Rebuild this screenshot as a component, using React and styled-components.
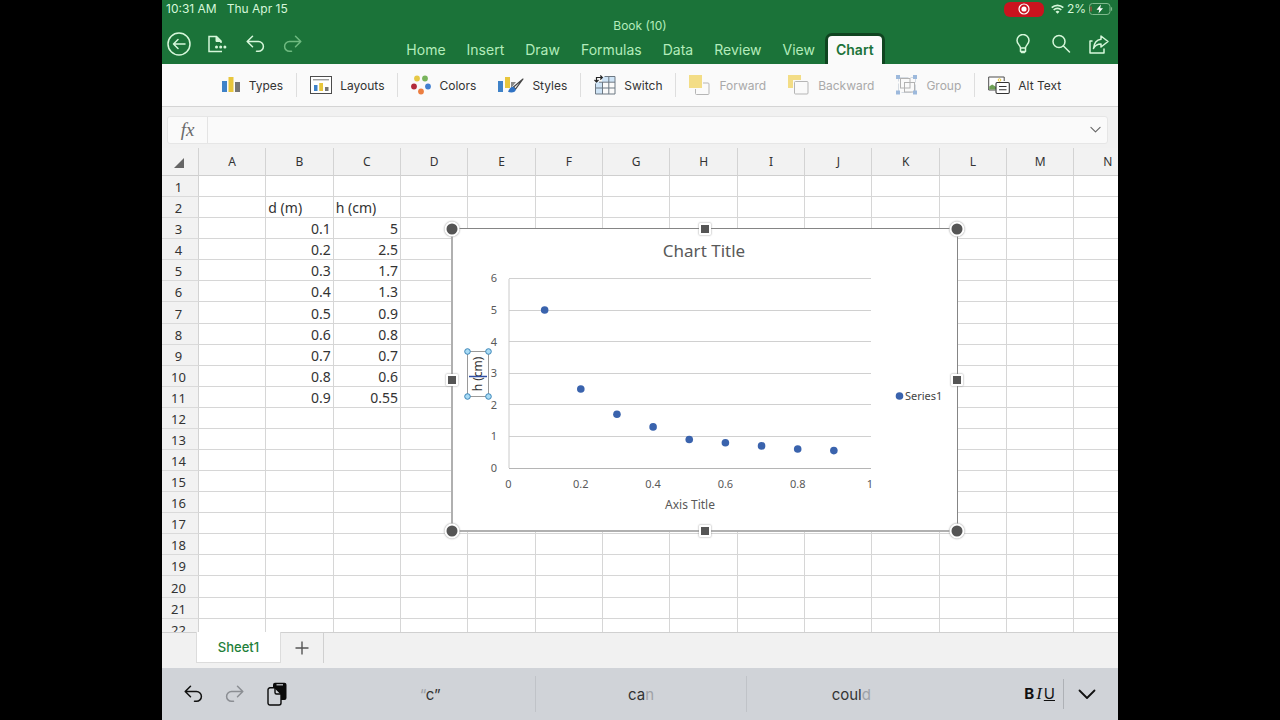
import React from "react";
import styled, { createGlobalStyle, css } from "styled-components";

const UI_FONT = `Inter, "Liberation Sans", sans-serif`;
const SHEET_FONT = `"Noto Sans", "Open Sans", sans-serif`;

const GlobalStyle = createGlobalStyle`
  *, *::before, *::after { box-sizing: border-box; }
  body { margin: 0; background: #000; font-family: ${UI_FONT}; }
  button, input { font: inherit; color: inherit; background: none; border: 0; padding: 0; margin: 0; }
  svg { display: block; flex: none; }
`;

const Page = styled.div`
  height: 100vh;
  padding: 0 162px;
  background: #000;
`;

const Screen = styled.div`
  display: flex;
  flex-direction: column;
  height: 100%;
  overflow: hidden;
  background: #fff;
`;

/* ---------- header ---------- */

const Header = styled.header`
  background: #1b7339;
  color: #b3ecbb;
`;

const StatusBar = styled.div`
  display: flex;
  justify-content: space-between;
  align-items: center;
  height: 18px;
  padding: 0 5px 0 4px;
  font-size: 12px;
  line-height: 18px;
  color: #d6f7da;
`;

const StatusGroup = styled.div`
  display: flex;
  align-items: center;
  gap: ${(p) => p.$gap}px;
`;

const RecordPill = styled.span`
  display: flex;
  align-items: center;
  justify-content: center;
  width: 40px;
  height: 15px;
  margin-right: 4px;
  border-radius: 6px;
  background: #c9131e;
`;

const TitleBar = styled.div`
  display: grid;
  grid-template-columns: 1fr auto 1fr;
`;

const IconGroup = styled.div`
  display: flex;
  align-items: center;
  justify-content: ${(p) => (p.$end ? "flex-end" : "flex-start")};
  gap: 14px;
  height: 46px;
  padding: 6px 7px 0 5px;
`;

const IconButton = styled.button`
  display: flex;
  align-items: center;
  justify-content: center;
  width: 24px;
  height: 24px;
  color: ${(p) => p.$color || "inherit"};
`;

const TitleColumn = styled.div`
  display: flex;
  flex-direction: column;
  align-items: center;
`;

const BookTitle = styled.h1`
  margin: 0;
  font-size: 12px;
  font-weight: 400;
  line-height: 16px;
`;

const Tabs = styled.nav`
  display: flex;
  gap: 5px;
  height: 30px;
  padding-top: 2px;
`;

const Tab = styled.button`
  padding: 0 8px;
  font-size: 14px;
  line-height: 28px;
  ${(p) =>
    p.$active &&
    css`
      font-weight: 600;
      color: #1b7339;
      background: #fafafa;
      border-radius: 4px 4px 0 0;
      box-shadow: 0 0 0 3px #0f4420;
      clip-path: inset(-4px -4px 0 -4px);
    `}
`;

/* ---------- ribbon ---------- */

const Ribbon = styled.div`
  display: flex;
  justify-content: center;
  align-items: center;
  height: 43px;
  padding-left: 2px;
  background: #fafafa;
  border-bottom: 1px solid #d4d4d4;
`;

const RibbonGroup = styled.div`
  display: flex;
  align-items: center;
  gap: 22px;
  padding: 0 13px;
  & + & {
    border-left: 1px solid #dedede;
  }
`;

const RibbonButton = styled.button`
  display: flex;
  align-items: center;
  gap: 8px;
  height: 24px;
  font-size: 12px;
  color: ${(p) => (p.disabled ? "#a9a9a9" : "#333")};
`;

/* ---------- formula bar ---------- */

const FormulaRow = styled.div`
  height: 41px;
  padding: 9px 10px 4px 5px;
  background: #f1f1f1;
`;

const FormulaBox = styled.div`
  display: flex;
  align-items: stretch;
  height: 28px;
  border: 1px solid #e6e6e6;
  border-radius: 3px;
  background: #fafafa;
`;

const FxLabel = styled.label`
  width: 40px;
  border-right: 1px solid #e4e4e4;
  text-align: center;
  font-family: "Liberation Serif", serif;
  font-style: italic;
  font-size: 19px;
  line-height: 25px;
  color: #6a6a6a;
`;

const FormulaInput = styled.input`
  flex: 1;
  min-width: 0;
  padding: 0 8px;
  outline: 0;
`;

/* ---------- worksheet ---------- */

const Sheet = styled.main`
  position: relative;
  flex: 1;
  min-height: 0;
  overflow: hidden;
`;

const Grid = styled.table`
  width: calc(100% + 24px);
  height: 492px;
  table-layout: fixed;
  border-collapse: separate;
  border-spacing: 0;
  font-family: ${SHEET_FONT};
  font-size: 14px;
  line-height: 16px;
  color: #333;
`;

const HeadCell = styled.th`
  width: ${(p) => (p.$corner ? "37px" : "auto")};
  height: 28px;
  padding: 0;
  font-size: 12px;
  font-weight: 400;
  background: #f2f2f2;
  border-right: 1px solid #d3d3d3;
  border-bottom: 1px solid #cfcfcf;
`;

const Corner = styled.svg`
  margin: 3px 0 0 12px;
`;

const RowHead = styled.th`
  padding: 2px 3px 0 0;
  font-size: 13px;
  font-weight: 400;
  background: #f2f2f2;
  border-right: 1px solid #d3d3d3;
  border-bottom: 1px solid #dadada;
`;

const Cell = styled.td`
  padding: 2px 2px 0;
  text-align: ${(p) => (p.$number ? "right" : "left")};
  white-space: nowrap;
  border-right: 1px solid #d6d6d6;
  border-bottom: 1px solid #d6d6d6;
`;

const ChartFrame = styled.figure`
  position: absolute;
  left: 289px;
  top: 80px;
  width: 507px;
  height: 304px;
  margin: 0;
  background: #fff;
  border: 1px solid #858585;
  border-left-color: #b0b0b0;
  border-bottom-color: #b0b0b0;
  box-shadow: inset 1px -1px #b0b0b0;
`;

const Handle = styled.span`
  position: absolute;
  left: ${(p) => p.$x};
  top: ${(p) => p.$y};
  width: ${(p) => (p.$round ? 15 : 12)}px;
  height: ${(p) => (p.$round ? 15 : 12)}px;
  transform: translate(-50%, -50%);
  border: 2px solid #fff;
  border-radius: ${(p) => (p.$round ? "50%" : "1px")};
  background: #555;
  box-shadow: 0 0 2px #888;
`;

const ChartText = styled.text`
  font-family: ${SHEET_FONT};
  font-size: ${(p) => p.$size || 11}px;
  fill: ${(p) => p.$fill || "#595959"};
  text-anchor: ${(p) => p.$anchor || "middle"};
`;

/* ---------- sheet tabs and keyboard bar ---------- */

const SheetTabs = styled.div`
  display: flex;
  height: 36px;
  padding-left: 34px;
  background: #f1f1f1;
  box-shadow: inset 0 1px #d0d0d0;
`;

const SheetTab = styled.button`
  width: 85px;
  height: 31px;
  font-size: 13px;
  font-weight: 500;
  color: #1e7f3a;
  background: #fff;
  border: 1px solid #dcdcdc;
  border-top: 0;
`;

const AddSheet = styled.button`
  display: flex;
  align-items: center;
  justify-content: center;
  width: 43px;
  height: 31px;
  border-right: 1px solid #d0d0d0;
  color: #555;
`;

const KeyboardBar = styled.div`
  display: grid;
  grid-template-columns: 163px 1fr 1fr 1fr 162px;
  align-items: center;
  height: 52px;
  background: #d0d3d8;
  color: #111;
`;

const KeyGroup = styled.div`
  display: flex;
  align-items: center;
  justify-content: ${(p) => (p.$end ? "flex-end" : "flex-start")};
  gap: ${(p) => (p.$end ? 8 : 18)}px;
  padding: 0 19px;
`;

const Suggestion = styled.button`
  height: 36px;
  font-size: 15px;
  color: #333;
  & + & {
    border-left: 1px solid #c0c3c8;
  }
`;

const Faded = styled.span`
  color: #9fa2a7;
`;

const FormatButton = styled.button`
  display: flex;
  gap: 2px;
  font-size: 15px;
  line-height: 20px;
`;

const Italic = styled.i`
  font-family: "Liberation Serif", serif;
  font-size: 17px;
`;

const KeyDivider = styled.span`
  width: 1px;
  height: 30px;
  margin-right: 3px;
  background: #aeb1b6;
`;

/* ---------- icons ---------- */

const line = {
  fill: "none",
  stroke: "currentColor",
  strokeWidth: 1.5,
  strokeLinecap: "round",
  strokeLinejoin: "round",
};

const BackIcon = () => (
  <svg width="24" height="24" viewBox="0 0 24 24" {...line}>
    <circle cx="12" cy="12" r="11" />
    <path d="M18 12H6.5M11 7.5 6.5 12l4.5 4.5" />
  </svg>
);

const FileIcon = () => (
  <svg width="20" height="18" viewBox="0 0 20 18" {...line} strokeLinecap="butt">
    <path d="M14 8V6L9.500 1.500H2v15h13" strokeLinejoin="miter" />
    <path d="M9 1.500V6.500h5z" fill="currentColor" strokeWidth="1" />
    <g fill="currentColor" stroke="none">
      <circle cx="9.500" cy="12" r="1.500" />
      <circle cx="13.700" cy="12" r="1.500" />
      <circle cx="17.900" cy="12" r="1.500" />
    </g>
  </svg>
);

const UndoIcon = ({ flip }) => (
  <svg width="20" height="18" viewBox="0 0 20 18" {...line}>
    <g transform={flip ? "translate(20 0) scale(-1 1)" : undefined}>
      <path d="M7.500 1.200 2.200 6.500l5.300 5.300M2.500 6.500h11a4.900 4.900 0 0 1 0 9.800h-2" />
    </g>
  </svg>
);

const BulbIcon = () => (
  <svg width="16" height="20" viewBox="0 0 16 20" {...line}>
    <path d="M5.500 14c0-2.500-3.500-4-3.500-7.500a6 6 0 0 1 12 0c0 3.500-3.500 5-3.500 7.500v3.500h-5zM5.500 14h5" />
    <path d="M6.500 18.500h3" />
  </svg>
);

const SearchIcon = () => (
  <svg width="20" height="20" viewBox="0 0 20 20" {...line}>
    <circle cx="8" cy="7.500" r="6" />
    <path d="m12.500 12 6 6" />
  </svg>
);

const ShareIcon = () => (
  <svg width="22" height="20" viewBox="0 0 22 20" {...line}>
    <path d="M4 7H2v12h14v-4" />
    <path d="M13 2l7 5.500-7 5.500v-3c-4 0-6 1.500-7.500 4.500C6 9 8.500 5.800 13 5.200z" />
  </svg>
);

const RecordIcon = () => (
  <svg width="12" height="12" viewBox="0 0 12 12">
    <circle cx="6" cy="6" r="5" fill="none" stroke="#fff" strokeWidth="1.200" />
    <circle cx="6" cy="6" r="2.600" fill="#fff" />
  </svg>
);

const WifiIcon = () => (
  <svg width="13" height="10" viewBox="0 0 13 10" fill="none" stroke="currentColor" strokeWidth="1.700">
    <path d="M.7 3.700a8.300 8.300 0 0 1 11.600 0M2.700 6a5.300 5.300 0 0 1 7.600 0" />
    <path d="M4.500 7.700a2.800 2.800 0 0 1 4 0L6.500 9.800z" fill="currentColor" stroke="none" />
  </svg>
);

const BatteryIcon = () => (
  <svg width="24" height="12" viewBox="0 0 24 12">
    <rect x=".5" y=".5" width="20.500" height="11" rx="3" fill="none" stroke="#7fba8d" />
    <path d="M2 3.500v5" stroke="#d0443c" strokeWidth="1" />
    <path d="M22.500 4.300v3.400" stroke="#7fba8d" strokeWidth="1.200" />
    <path d="M12 1.500 7.500 6.800h2.800L9.500 10.500 14 5.200h-2.800z" fill="#fff" />
  </svg>
);

const TypesIcon = () => (
  <svg width="20" height="18" viewBox="0 0 20 18">
    <rect x="1" y="5" width="5" height="11" fill="#3f82c8" />
    <rect x="7.500" y="1" width="5" height="15" fill="#e8c63c" />
    <rect x="14" y="6" width="5" height="10" fill="#757575" />
  </svg>
);

const LayoutsIcon = () => (
  <svg width="22" height="18" viewBox="0 0 22 18">
    <rect x=".5" y=".5" width="21" height="17" fill="#fff" stroke="#4c4c4c" />
    <path d="M3 3.800h16" stroke="#777" />
    <rect x="4" y="9" width="3.500" height="6" fill="#3f82c8" />
    <rect x="9.200" y="7" width="3.800" height="8" fill="#e8c63c" />
    <rect x="15" y="11" width="3.500" height="4" fill="#777" />
  </svg>
);

const ColorsIcon = () => (
  <svg width="20" height="20" viewBox="0 0 20 20">
    <circle cx="6" cy="3.500" r="2.900" fill="#e6c845" />
    <circle cx="14" cy="3.500" r="2.900" fill="#78b45c" />
    <circle cx="3" cy="11.500" r="2.900" fill="#b22b3a" />
    <circle cx="17" cy="11.500" r="2.900" fill="#417fd0" />
    <circle cx="10" cy="16.500" r="2.900" fill="#ec7e40" />
  </svg>
);

const StylesIcon = () => (
  <svg width="26" height="18" viewBox="0 0 26 18">
    <rect x="0" y="5" width="5" height="11" fill="#3f82c8" />
    <rect x="7" y="1" width="5" height="11" fill="#e8c63c" />
    <path d="M13 6h5l-4 5h-1z" fill="#8a8a8a" />
    <path d="M25 3 15.500 11l2 2.200z" fill="#fafafa" stroke="#444" strokeWidth="1.200" strokeLinejoin="round" />
    <path d="M15.300 10.800c-3 0-4 2-5.300 5 3 1.300 8 .8 7.800-2.500z" fill="#2f72c4" />
  </svg>
);

const SwitchIcon = () => (
  <svg width="22" height="20" viewBox="0 0 22 20">
    <path d="M8 2h13v5H8v12H1.500V7H8z" fill="#cfe4f6" />
    <path d="M10.500 1.500h10.500v17.500h-19.500v-10.500" fill="none" stroke="#6d7883" />
    <path d="M8.500 7v12M14.800 1.500V19M5 7.200h16M1.500 13h19.500" fill="none" stroke="#6d7883" />
    <path d="M2.500 7V2.500H8M6.300.5l2 2-2 2M.5 5l2 2 2-2" fill="none" stroke="#222" strokeWidth="1.200" />
  </svg>
);

const ForwardIcon = () => (
  <svg width="22" height="20" viewBox="0 0 22 20">
    <rect x="6.500" y="8" width="13.500" height="11.500" rx="1" fill="#fafafa" stroke="#b5b5b5" />
    <rect x="0" y="0" width="14" height="14" fill="#fafafa" />
    <rect x="0" y="0" width="13" height="13" fill="#f3dd86" />
  </svg>
);

const BackwardIcon = () => (
  <svg width="22" height="20" viewBox="0 0 22 20">
    <rect x="0" y="0" width="13" height="13" fill="#f3dd86" />
    <rect x="5" y="5" width="9" height="9" fill="#fafafa" />
    <rect x="6.500" y="6.500" width="13.500" height="12.500" rx="1" fill="#fafafa" stroke="#b5b5b5" />
  </svg>
);

const GroupIcon = () => (
  <svg width="22" height="20" viewBox="0 0 22 20">
    <g fill="#fafafa" stroke="#b2b2b2">
      <path d="M2.500 2.500h17v15h-17z" strokeDasharray="10 2" stroke="#d5dbe2" />
      <rect x="4.500" y="3.500" width="9.500" height="9.500" />
      <rect x="8.500" y="7.500" width="10" height="9.500" fill="none" />
    </g>
    <g fill="#9db9dc">
      <rect x="0" y="0" width="4" height="4" />
      <rect x="17" y="0" width="4" height="4" />
      <rect x="0" y="15.500" width="4" height="4" />
      <rect x="17" y="15.500" width="4" height="4" />
    </g>
  </svg>
);

const AltTextIcon = () => (
  <svg width="22" height="20" viewBox="0 0 22 20">
    <path d="M7.500 15H.7V2h15.500v4" fill="#fff" stroke="#4c4c4c" />
    <path d="M1.200 14.500v-3l3-2 4 2.500v2.500z" fill="#6fa055" />
    <circle cx="11.500" cy="5" r="1.300" fill="none" stroke="#e8c63c" />
    <rect x="8" y="7.500" width="13.300" height="11" rx="1.200" fill="#fff" stroke="#333" strokeWidth="1.100" />
    <path d="M11 11.500h7.500M11 14.700h7.500" stroke="#333" strokeWidth="1.100" />
  </svg>
);

const ChevronIcon = ({ size, color }) => (
  <svg width={size} height={size} viewBox="0 0 18 18" {...line} stroke={color} strokeWidth="1.800">
    <path d="m1.500 5.500 7.500 7.500 7.500-7.500" />
  </svg>
);

const PlusIcon = () => (
  <svg width="14" height="14" viewBox="0 0 14 14" stroke="currentColor" strokeWidth="1.400">
    <path d="M7 .5v13M.5 7h13" />
  </svg>
);

const PasteIcon = () => (
  <svg width="20" height="24" viewBox="0 0 20 24">
    <path d="M8 .8h9.500a2 2 0 0 1 2 2V16a2 2 0 0 1-2 2H6V2.800a2 2 0 0 1 2-2z" fill="#0a0a0a" />
    <path d="M9.500 2.800h6.500" stroke="#d0d3d8" strokeWidth="1.200" />
    <path d="M3 5.800h5l6 6V21a2 2 0 0 1-2 2H3a2 2 0 0 1-2-2V7.800a2 2 0 0 1 2-2z" fill="#d0d3d8" stroke="#0a0a0a" strokeWidth="1.400" />
    <path d="M8 6v4.500a1.500 1.500 0 0 0 1.500 1.500H14" fill="none" stroke="#0a0a0a" strokeWidth="1.400" />
  </svg>
);

/* ---------- data ---------- */

const TABS = ["Home", "Insert", "Draw", "Formulas", "Data", "Review", "View", "Chart"];

const RIBBON = [
  [{ label: "Types", Icon: TypesIcon }],
  [{ label: "Layouts", Icon: LayoutsIcon }],
  [
    { label: "Colors", Icon: ColorsIcon },
    { label: "Styles", Icon: StylesIcon },
  ],
  [{ label: "Switch", Icon: SwitchIcon }],
  [
    { label: "Forward", Icon: ForwardIcon, disabled: true },
    { label: "Backward", Icon: BackwardIcon, disabled: true },
    { label: "Group", Icon: GroupIcon, disabled: true },
  ],
  [{ label: "Alt Text", Icon: AltTextIcon }],
];

const COLUMNS = "ABCDEFGHIJKLMN".split("");
const ROWS = Array.from({ length: 22 }, (_, i) => i + 1);

const POINTS = [
  [0.1, 5],
  [0.2, 2.5],
  [0.3, 1.7],
  [0.4, 1.3],
  [0.5, 0.9],
  [0.6, 0.8],
  [0.7, 0.7],
  [0.8, 0.6],
  [0.9, 0.55],
];

function cellValue(column, row) {
  if (column !== "B" && column !== "C") return "";
  const index = column === "B" ? 0 : 1;
  if (row === 2) return ["d (m)", "h (cm)"][index];
  const point = POINTS[row - 3];
  return point ? point[index] : "";
}

/* ---------- chart ---------- */

const plotX = (v) => 56.5 + 361.5 * v;
const plotY = (v) => 239 - 31.6 * v;

const HANDLES = [
  ["0%", "0%", true],
  ["50%", "0%", false],
  ["100%", "0%", true],
  ["0%", "50%", false],
  ["100%", "50%", false],
  ["0%", "100%", true],
  ["50%", "100%", false],
  ["100%", "100%", true],
];

const Chart = () => (
  <ChartFrame>
    <svg width="100%" height="100%" viewBox="0 0 505 302" role="img" aria-label="Chart Title">
      <ChartText x="252" y="28" $size={17}>Chart Title</ChartText>
      {[0, 1, 2, 3, 4, 5, 6].map((v) => (
        <g key={v}>
          <path d={`M57 ${Math.floor(plotY(v)) + 0.5}H419`} stroke={v ? "#d0d0d0" : "#b5b5b5"} />
          <ChartText x="42" y={plotY(v) + 4}>{v}</ChartText>
        </g>
      ))}
      <path d="M57 50V239" stroke="#cacaca" />
      {[0, 0.2, 0.4, 0.6, 0.8, 1].map((v) => (
        <ChartText key={v} x={plotX(v)} y="259">{v}</ChartText>
      ))}
      {POINTS.map(([x, y]) => (
        <circle key={x} cx={plotX(x)} cy={plotY(y)} r="3.800" fill="#3a63ad" />
      ))}
      <ChartText x="238" y="280" $size={12}>Axis Title</ChartText>
      <circle cx="447.500" cy="167" r="3.800" fill="#3a63ad" />
      <ChartText x="453" y="171" $anchor="start" $fill="#444">Series1</ChartText>

      <rect x="15.500" y="122.500" width="21" height="45" fill="#fff" stroke="#9a9a9a" />
      <ChartText transform="translate(30 145) rotate(-90)" $size={12} $fill="#333">h (cm)</ChartText>
      <path d="M17 147.500H35" stroke="#2f4ea3" strokeWidth="1.500" />
      {[[15.5, 122.5], [36.5, 122.5], [15.5, 167.5], [36.5, 167.5]].map(([x, y]) => (
        <circle key={`${x}-${y}`} cx={x} cy={y} r="2.800" fill="#a9dbf5" stroke="#3c86b8" />
      ))}
    </svg>
    {HANDLES.map(([x, y, round]) => (
      <Handle key={x + y} $x={x} $y={y} $round={round} />
    ))}
  </ChartFrame>
);

export default function App() {
  return (
    <Page>
      <GlobalStyle />
      <Screen>
        <Header>
          <StatusBar>
            <StatusGroup $gap={10}>
              <span>10:31 AM</span>
              <span>Thu Apr 15</span>
            </StatusGroup>
            <StatusGroup $gap={3}>
              <RecordPill><RecordIcon /></RecordPill>
              <WifiIcon />
              <span>2%</span>
              <BatteryIcon />
            </StatusGroup>
          </StatusBar>
          <TitleBar>
            <IconGroup>
              <IconButton aria-label="Back" $color="#d6f7da"><BackIcon /></IconButton>
              <IconButton aria-label="File" $color="#d6f7da"><FileIcon /></IconButton>
              <IconButton aria-label="Undo" $color="#d6f7da"><UndoIcon /></IconButton>
              <IconButton aria-label="Redo" $color="#6fba80"><UndoIcon flip /></IconButton>
            </IconGroup>
            <TitleColumn>
              <BookTitle>Book (10)</BookTitle>
              <Tabs>
                {TABS.map((tab) => (
                  <Tab key={tab} $active={tab === "Chart"}>{tab}</Tab>
                ))}
              </Tabs>
            </TitleColumn>
            <IconGroup $end>
              <IconButton aria-label="Tell me" $color="#d6f7da"><BulbIcon /></IconButton>
              <IconButton aria-label="Search" $color="#d6f7da"><SearchIcon /></IconButton>
              <IconButton aria-label="Share" $color="#d6f7da"><ShareIcon /></IconButton>
            </IconGroup>
          </TitleBar>
        </Header>

        <Ribbon>
          {RIBBON.map((group) => (
            <RibbonGroup key={group[0].label}>
              {group.map(({ label, Icon, disabled }) => (
                <RibbonButton key={label} disabled={disabled}>
                  <Icon />
                  {label}
                </RibbonButton>
              ))}
            </RibbonGroup>
          ))}
        </Ribbon>

        <FormulaRow>
          <FormulaBox>
            <FxLabel htmlFor="formula">fx</FxLabel>
            <FormulaInput id="formula" type="text" />
            <IconButton aria-label="Expand formula bar">
              <ChevronIcon size={11} color="#666" />
            </IconButton>
          </FormulaBox>
        </FormulaRow>

        <Sheet>
          <Grid>
            <thead>
              <tr>
                <HeadCell $corner aria-label="Select all">
                  <Corner width="10" height="10" viewBox="0 0 10 10">
                    <path d="M10 0V10H0z" fill="#666" />
                  </Corner>
                </HeadCell>
                {COLUMNS.map((c) => (
                  <HeadCell key={c} scope="col">{c}</HeadCell>
                ))}
              </tr>
            </thead>
            <tbody>
              {ROWS.map((r) => (
                <tr key={r}>
                  <RowHead scope="row">{r}</RowHead>
                  {COLUMNS.map((c) => {
                    const value = cellValue(c, r);
                    return (
                      <Cell key={c} $number={typeof value === "number"}>{value}</Cell>
                    );
                  })}
                </tr>
              ))}
            </tbody>
          </Grid>
          <Chart />
        </Sheet>

        <SheetTabs>
          <SheetTab>Sheet1</SheetTab>
          <AddSheet aria-label="Add sheet"><PlusIcon /></AddSheet>
        </SheetTabs>

        <KeyboardBar>
          <KeyGroup>
            <IconButton aria-label="Undo"><UndoIcon /></IconButton>
            <IconButton aria-label="Redo" $color="#8b8e93"><UndoIcon flip /></IconButton>
            <IconButton aria-label="Paste"><PasteIcon /></IconButton>
          </KeyGroup>
          <Suggestion><Faded>“</Faded>c”</Suggestion>
          <Suggestion>ca<Faded>n</Faded></Suggestion>
          <Suggestion>coul<Faded>d</Faded></Suggestion>
          <KeyGroup $end>
            <FormatButton aria-label="Text format">
              <b>B</b>
              <Italic>I</Italic>
              <u>U</u>
            </FormatButton>
            <KeyDivider />
            <IconButton aria-label="Hide keyboard"><ChevronIcon size={18} color="#111" /></IconButton>
          </KeyGroup>
        </KeyboardBar>
      </Screen>
    </Page>
  );
}
